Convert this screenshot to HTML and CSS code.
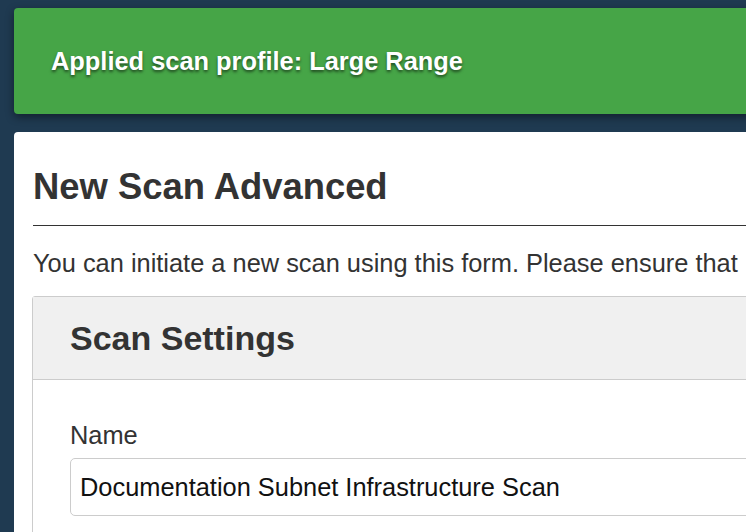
FILE: index.html
```html
<!DOCTYPE html>
<html>
<head>
<meta charset="utf-8">
<link rel="stylesheet" href="styles.css">
</head>
<body>
<div class="page">
  <div class="alert">Applied scan profile: Large Range</div>
  <div class="card">
    <h1 class="title">New Scan Advanced</h1>
    <hr class="rule">
    <p class="intro">You can initiate a new scan using this form. Please ensure that</p>
    <div class="panel">
      <div class="panel-heading"><h2 class="panel-title">Scan Settings</h2></div>
      <div class="panel-body">
        <label class="label" for="name">Name</label>
        <input class="input" id="name" type="text" value="Documentation Subnet Infrastructure Scan">
      </div>
    </div>
  </div>
</div>
</body>
</html>
```

FILE: styles.css
```css
html, body {
  margin: 0;
  padding: 0;
  background: #1f3a51;
  overflow: hidden;
  height: 532px;
}
.page {
  width: 1100px;
  padding: 8px 0 0 14px;
  font-family: "Liberation Sans", Arial, sans-serif;
  color: #333;
}
.alert {
  height: 106px;
  box-sizing: border-box;
  background: #46a547;
  border-radius: 4px;
  box-shadow: 0 3px 8px rgba(0, 0, 0, 0.45);
  color: #fff;
  font-weight: bold;
  font-size: 25.4px;
  display: flex;
  align-items: center;
  padding-left: 37px;
  text-shadow: 0 2px 3px rgba(0, 0, 0, 0.55);
}
.card {
  margin-top: 18px;
  background: #fff;
  border-radius: 4px;
  padding: 35px 0 0 19px;
  height: 600px;
}
.title {
  margin: 0;
  font-size: 36.4px;
  line-height: 40px;
  font-weight: bold;
  color: #333;
}
.rule {
  margin: 18px 0 0 0;
  border: 0;
  border-top: 1px solid #333;
  height: 0;
}
.intro {
  margin: 22px 0 0 0;
  font-size: 25.4px;
  line-height: 30px;
  white-space: nowrap;
}
.panel {
  margin-top: 18px;
  margin-left: -1px;
  border: 1px solid #ccc;
  border-radius: 3px 3px 0 0;
}
.panel-heading {
  background: #f0f0f0;
  border-bottom: 1px solid #ccc;
  height: 83px;
  box-sizing: border-box;
  display: flex;
  align-items: center;
  padding-left: 37px;
}
.panel-title {
  margin: 0;
  font-size: 34px;
  font-weight: bold;
  color: #333;
}
.panel-body {
  padding: 40px 0 40px 37px;
  display: flex;
  flex-direction: column;
  align-items: flex-start;
}
.label {
  font-size: 25.4px;
  line-height: 30px;
  margin-bottom: 8px;
}
.input {
  width: 900px;
  height: 58px;
  box-sizing: border-box;
  border: 1px solid #ccc;
  border-radius: 5px;
  padding: 0 9px;
  font-family: "Liberation Sans", Arial, sans-serif;
  font-size: 25.4px;
  color: #111;
  background: #fff;
}
```
